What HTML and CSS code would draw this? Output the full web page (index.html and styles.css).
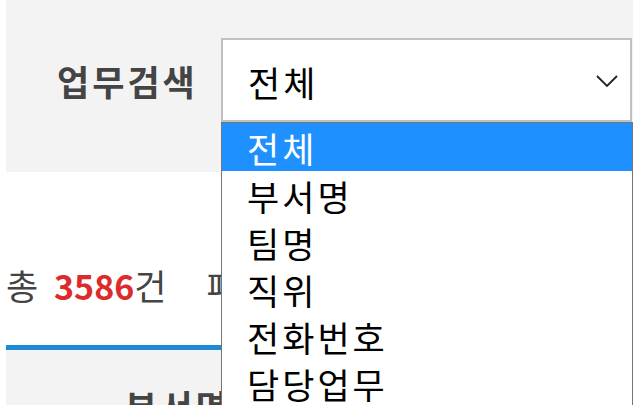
FILE: index.html
```html
<!DOCTYPE html>
<html lang="ko">
<head>
<meta charset="utf-8">
<title>업무검색</title>
<link rel="stylesheet" href="styles.css">
</head>
<body>
<div class="page">
  <section class="search">
    <label class="search-label">업무검색</label>
    <div class="select-wrap">
      <div class="select">
        <span class="select-value">전체</span>
        <svg class="chevron" width="22" height="12" viewBox="0 0 22 12"><path d="M1 1 L11 11 L21 1" fill="none" stroke="#222" stroke-width="1.8"/></svg>
      </div>
      <ul class="dropdown">
        <li class="option selected">전체</li>
        <li class="option">부서명</li>
        <li class="option">팀명</li>
        <li class="option">직위</li>
        <li class="option">전화번호</li>
        <li class="option">담당업무</li>
      </ul>
    </div>
  </section>
  <div class="summary">
    <span class="total">총 <strong class="count">3586</strong>건</span>
    <span class="page-info">페이지 1/359</span>
  </div>
  <div class="table-head">
    <span class="th">부서명</span>
  </div>
</div>
</body>
</html>
```
FILE: styles.css
```css
html, body {
  margin: 0;
  padding: 0;
  background: #fff;
  overflow: hidden;
}
body {
  font-family: "Noto Sans CJK KR", "Noto Sans", sans-serif;
  font-size: 35px;
  letter-spacing: 3px;
  color: #444;
}
.page {
  padding-left: 6px;
  width: 700px;
}
.search {
  background: #f3f3f3;
  height: 172px;
  box-sizing: border-box;
  padding: 38px 0 0 51px;
  display: flex;
  align-items: flex-start;
}
.search-label {
  width: 164px;
  height: 84px;
  display: flex;
  align-items: center;
  font-weight: bold;
  color: #444;
}
.select-wrap {
  position: relative;
}
.select {
  width: 411px;
  height: 84px;
  box-sizing: border-box;
  border: 2px solid #c0c0c0;
  background: #fff;
  display: flex;
  align-items: center;
  justify-content: space-between;
  padding: 2px 12px 0 25px;
  color: #000;
}
.chevron {
  display: block;
}
.dropdown {
  position: absolute;
  top: 100%;
  left: 0;
  width: 412px;
  margin: 0;
  padding: 0;
  list-style: none;
  background: #fff;
  border: 1px solid #767676;
  box-sizing: border-box;
}
.option {
  height: 47px;
  line-height: 49px;
  padding-left: 25px;
  color: #000;
}
.option.selected {
  background: #1e90ff;
  color: #fff;
  height: 48px;
}
.summary {
  margin-top: 88px;
  height: 50px;
  line-height: 50px;
  display: flex;
  align-items: center;
  color: #444;
}
.count {
  color: #dd2a2a;
  font-weight: bold;
  font-size: 34px;
  letter-spacing: 0;
}
.page-info {
  margin-left: 37px;
}
.table-head {
  margin-top: 35px;
  border-top: 5px solid #1e8ad6;
  background: #f3f3f3;
  height: 120px;
  padding-left: 119px;
  padding-top: 30px;
  box-sizing: border-box;
}
.th {
  font-weight: bold;
  color: #444;
}
```
